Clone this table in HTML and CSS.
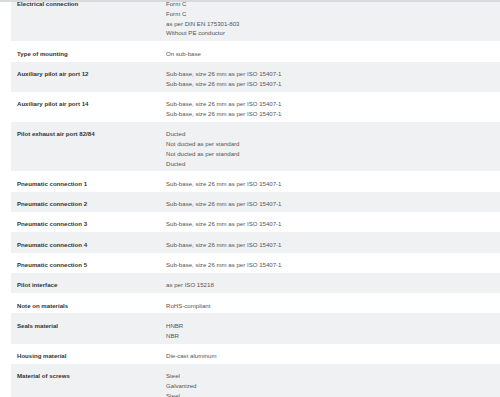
FILE: index.html
```html
<!DOCTYPE html>
<html lang="en">
<head>
<meta charset="utf-8">
<title>Technical data</title>
<link rel="stylesheet" href="styles.css">
</head>
<body>
<div class="topbar"></div>
<div class="specs">
  <div class="row">
    <div class="label">Electrical connection</div>
    <div class="value"><div>Form C</div><div>Form C</div><div>as per DIN EN 175301-803</div><div>Without PE conductor</div></div>
  </div>
  <div class="row">
    <div class="label">Type of mounting</div>
    <div class="value"><div>On sub-base</div></div>
  </div>
  <div class="row">
    <div class="label">Auxiliary pilot air port 12</div>
    <div class="value"><div>Sub-base, size 26 mm as per ISO 15407-1</div><div>Sub-base, size 26 mm as per ISO 15407-1</div></div>
  </div>
  <div class="row">
    <div class="label">Auxiliary pilot air port 14</div>
    <div class="value"><div>Sub-base, size 26 mm as per ISO 15407-1</div><div>Sub-base, size 26 mm as per ISO 15407-1</div></div>
  </div>
  <div class="row">
    <div class="label">Pilot exhaust air port 82/84</div>
    <div class="value"><div>Ducted</div><div>Not ducted as per standard</div><div>Not ducted as per standard</div><div>Ducted</div></div>
  </div>
  <div class="row">
    <div class="label">Pneumatic connection 1</div>
    <div class="value"><div>Sub-base, size 26 mm as per ISO 15407-1</div></div>
  </div>
  <div class="row">
    <div class="label">Pneumatic connection 2</div>
    <div class="value"><div>Sub-base, size 26 mm as per ISO 15407-1</div></div>
  </div>
  <div class="row">
    <div class="label">Pneumatic connection 3</div>
    <div class="value"><div>Sub-base, size 26 mm as per ISO 15407-1</div></div>
  </div>
  <div class="row">
    <div class="label">Pneumatic connection 4</div>
    <div class="value"><div>Sub-base, size 26 mm as per ISO 15407-1</div></div>
  </div>
  <div class="row">
    <div class="label">Pneumatic connection 5</div>
    <div class="value"><div>Sub-base, size 26 mm as per ISO 15407-1</div></div>
  </div>
  <div class="row">
    <div class="label">Pilot interface</div>
    <div class="value"><div>as per ISO 15218</div></div>
  </div>
  <div class="row">
    <div class="label">Note on materials</div>
    <div class="value"><div>RoHS-compliant</div></div>
  </div>
  <div class="row">
    <div class="label">Seals material</div>
    <div class="value"><div>HNBR</div><div>NBR</div></div>
  </div>
  <div class="row">
    <div class="label">Housing material</div>
    <div class="value"><div>Die-cast aluminum</div></div>
  </div>
  <div class="row">
    <div class="label">Material of screws</div>
    <div class="value"><div>Steel</div><div>Galvanized</div><div>Steel</div></div>
  </div>
</div>
</body>
</html>
```

FILE: styles.css
```css
html, body {
  margin: 0;
  padding: 0;
  background: #ffffff;
  overflow: hidden;
}

body {
  font-family: "Liberation Sans", Arial, sans-serif;
  font-size: 6.1px;
  line-height: 9.8px;
}

.topbar {
  position: fixed;
  top: 0;
  left: 0;
  right: 0;
  height: 2px;
  background: #d9dadd;
  z-index: 2;
}

.specs {
  margin: -8.3px 0 0 11px;
}

.row {
  display: grid;
  grid-template-columns: 149px 1fr;
  padding: 7.4px 0 3.1px 6px;
}

.row:nth-child(odd) {
  background: #f0f1f3;
}

.label {
  font-weight: bold;
  color: #333333;
  font-size: 6.1px;
}

.value {
  color: #555555;
}
```
